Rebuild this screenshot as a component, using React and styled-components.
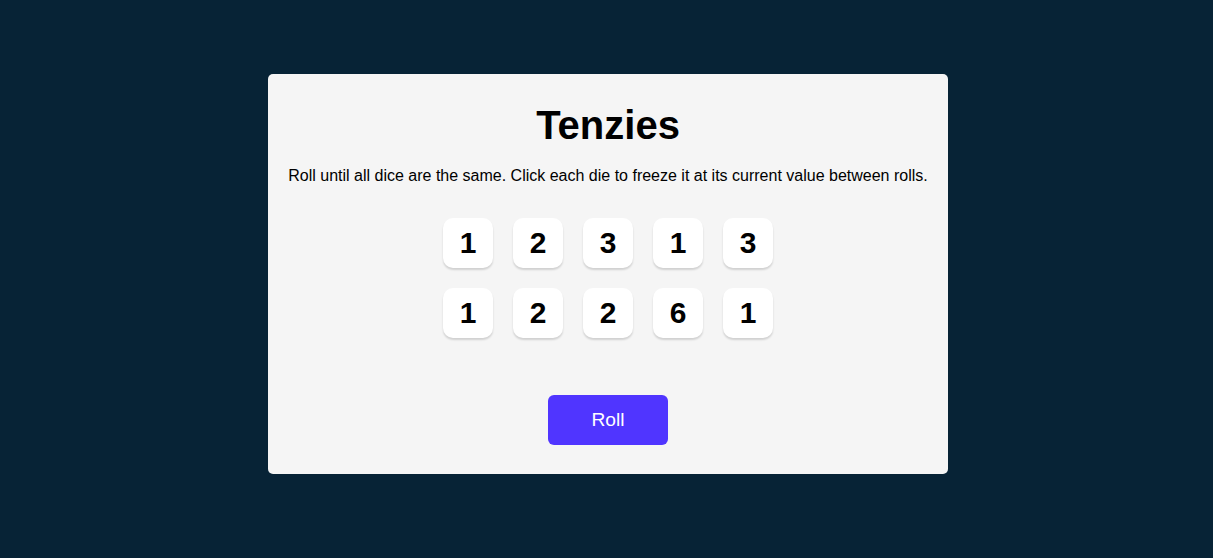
import React, { useState } from 'react';
import styled, { createGlobalStyle } from 'styled-components';

const GlobalStyle = createGlobalStyle`
  * { box-sizing: border-box; }
  body {
    margin: 0;
    background-color: #072336;
    font-family: "Liberation Sans", Arial, Helvetica, sans-serif;
  }
`;

const Page = styled.div`
  min-height: 100vh;
  display: flex;
  justify-content: center;
  align-items: flex-start;
  padding: 74px 0 0 3px;
`;

const Board = styled.main`
  width: 680px;
  height: 400px;
  background-color: #F5F5F5;
  border-radius: 5px;
  padding: 31px 0 29px;
  display: flex;
  flex-direction: column;
  align-items: center;
`;

const Title = styled.h1`
  margin: 0;
  font-size: 40px;
  line-height: 40px;
  font-weight: 700;
  color: #000;
`;

const Instructions = styled.p`
  margin: 20.5px 0 0;
  font-size: 16px;
  line-height: 20px;
  color: #000;
  text-align: center;
`;

const DiceGrid = styled.div`
  margin-top: 32.5px;
  display: grid;
  grid-template-columns: repeat(5, 50px);
  grid-auto-rows: 50px;
  gap: 20px;
`;

const Die = styled.button`
  width: 50px;
  height: 50px;
  border: none;
  border-radius: 10px;
  background-color: ${p => (p.$held ? '#59E391' : '#FFFFFF')};
  box-shadow: 0px 2px 2px rgba(0, 0, 0, 0.15);
  font-family: inherit;
  font-size: 30px;
  font-weight: 700;
  color: #000;
  display: flex;
  align-items: center;
  justify-content: center;
  padding: 0;
  cursor: pointer;
`;

const RollButton = styled.button`
  margin-top: auto;
  width: 120px;
  height: 50px;
  border: none;
  border-radius: 6px;
  background-color: #5035FF;
  color: #fff;
  font-family: inherit;
  font-size: 19.2px;
  cursor: pointer;
`;

const startValues = [1, 2, 3, 1, 3, 1, 2, 2, 6, 1];

export default function App() {
  const [dice, setDice] = useState(
    startValues.map((value, id) => ({ id, value, held: false }))
  );

  const toggle = id =>
    setDice(d => d.map(die => (die.id === id ? { ...die, held: !die.held } : die)));

  const roll = () =>
    setDice(d =>
      d.map(die => (die.held ? die : { ...die, value: Math.ceil(Math.random() * 6) }))
    );

  return (
    <>
      <GlobalStyle />
      <Page>
        <Board>
          <Title>Tenzies</Title>
          <Instructions>
            Roll until all dice are the same. Click each die to freeze it at its current value between rolls.
          </Instructions>
          <DiceGrid>
            {dice.map(die => (
              <Die key={die.id} $held={die.held} onClick={() => toggle(die.id)}>
                {die.value}
              </Die>
            ))}
          </DiceGrid>
          <RollButton onClick={roll}>Roll</RollButton>
        </Board>
      </Page>
    </>
  );
}
